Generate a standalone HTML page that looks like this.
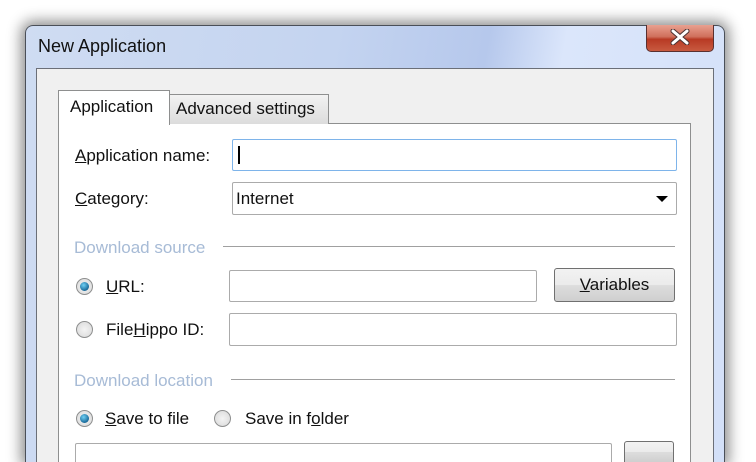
<!DOCTYPE html>
<html><head><meta charset="utf-8"><style>
*{box-sizing:border-box;margin:0;padding:0}
html,body{width:756px;height:462px;overflow:hidden}
body{background:#fff;font-family:"Liberation Sans",sans-serif;font-size:17px;color:#111;position:relative}
.abs{position:absolute}
.win{left:25px;top:25px;width:700px;height:437px;border:1px solid #4a4f58;border-bottom:none;border-radius:8px 8px 0 0;background:linear-gradient(100deg,#cfdcf2 0%,#c4d4f0 40%,#b6c8ec 60%,#dbe6fb 70%,#d3e0f8 100%);box-shadow:0 0 14px 4px rgba(0,0,0,.45)}
.client{left:36px;top:68px;width:678px;height:394px;background:#f0f0f0;border:1px solid #6b6f78;border-bottom:none}
.panel{left:58px;top:123px;width:633px;height:339px;background:#fff;border:1px solid #8e8f8f;border-bottom:none}
.tab{border:1px solid #8e8f8f;border-bottom:none;background:#fff}
.tab2{background:linear-gradient(#f2f2f2,#dcdcdc)}
.inp{background:#fff;border:1px solid #ababab;border-radius:2px}
.lbl{white-space:nowrap}
.grp{color:#a7bbd6;white-space:nowrap}
.line{height:1px;background:#a0a0a0}
.radio{width:17px;height:17px;border-radius:50%;border:1px solid #8e8f8f;background:radial-gradient(circle,#f4f4f4,#d8d8d8)}
.radio.on::after{content:"";position:absolute;left:3px;top:3px;width:9px;height:9px;border-radius:50%;background:radial-gradient(circle at 40% 35%,#6fd0f4,#1a6a9a 70%,#0d3d5e)}
.btn{border:1px solid #707070;border-radius:3px;background:linear-gradient(#f2f2f2 0%,#ebebeb 50%,#dddddd 51%,#cfcfcf 100%);text-align:center}
u{text-decoration:underline}
</style></head><body>
<div class="abs win"></div>
<div class="abs lbl" style="left:38px;top:36px;font-size:18px;color:#111">New Application</div>
<div class="abs" style="left:646px;top:25px;width:68px;height:27px;border:1px solid #5a3030;border-top:none;border-radius:0 0 5px 5px;background:linear-gradient(#e8a090 0%,#d0705c 45%,#b83a24 55%,#c85a40 100%)"></div>
<svg class="abs" style="left:670px;top:29px" width="20" height="16" viewBox="0 0 20 16"><path d="M3 2 L17 14 M17 2 L3 14" stroke="#4a3030" stroke-width="5" stroke-linecap="round"/><path d="M3 2 L17 14 M17 2 L3 14" stroke="#fff" stroke-width="3" stroke-linecap="round"/></svg>
<div class="abs client"></div>
<div class="abs panel"></div>
<div class="abs tab tab2" style="left:169px;top:94px;width:160px;height:30px"></div>
<div class="abs lbl" style="left:176px;top:99px">Advanced settings</div>
<div class="abs tab" style="left:58px;top:90px;width:112px;height:35px"></div>
<div class="abs lbl" style="left:70px;top:97px">Application</div>

<div class="abs lbl" style="left:75px;top:146px"><u>A</u>pplication name:</div>
<div class="abs inp" style="left:232px;top:139px;width:445px;height:32px;border-color:#7eb4ea"></div>
<div class="abs" style="left:238px;top:146px;width:2px;height:18px;background:#000"></div>
<div class="abs lbl" style="left:75px;top:189px"><u>C</u>ategory:</div>
<div class="abs inp" style="left:232px;top:182px;width:445px;height:33px"></div>
<div class="abs lbl" style="left:236px;top:189px">Internet</div>
<div class="abs" style="left:656px;top:196px;width:0;height:0;border-left:6px solid transparent;border-right:6px solid transparent;border-top:6px solid #000"></div>

<div class="abs grp" style="left:74px;top:238px">Download source</div>
<div class="abs line" style="left:223px;top:246px;width:452px"></div>
<div class="abs radio on" style="left:76px;top:278px"></div>
<div class="abs lbl" style="left:106px;top:277px"><u>U</u>RL:</div>
<div class="abs inp" style="left:229px;top:270px;width:308px;height:32px"></div>
<div class="abs btn" style="left:554px;top:268px;width:121px;height:34px;line-height:32px"><u>V</u>ariables</div>
<div class="abs radio" style="left:76px;top:321px"></div>
<div class="abs lbl" style="left:106px;top:320px">File<u>H</u>ippo ID:</div>
<div class="abs inp" style="left:229px;top:313px;width:448px;height:33px"></div>

<div class="abs grp" style="left:74px;top:371px">Download location</div>
<div class="abs line" style="left:231px;top:379px;width:444px"></div>
<div class="abs radio on" style="left:76px;top:410px"></div>
<div class="abs lbl" style="left:105px;top:409px"><u>S</u>ave to file</div>
<div class="abs radio" style="left:214px;top:410px"></div>
<div class="abs lbl" style="left:245px;top:409px">Save in f<u>o</u>lder</div>
<div class="abs inp" style="left:75px;top:443px;width:537px;height:19px;border-bottom:none;border-radius:2px 2px 0 0"></div>
<div class="abs btn" style="left:624px;top:441px;width:50px;height:21px;border-bottom:none;border-radius:3px 3px 0 0"></div>
</body></html>
